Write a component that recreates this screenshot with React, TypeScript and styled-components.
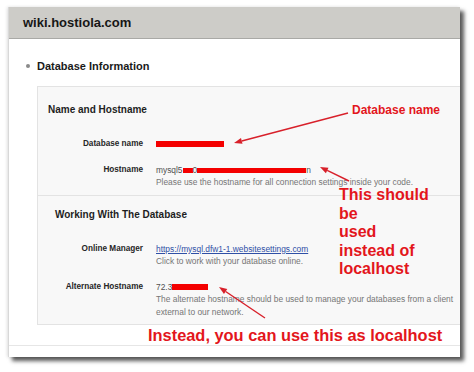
import React from "react";
import styled, { createGlobalStyle } from "styled-components";

const Global = createGlobalStyle`
  html, body { margin: 0; padding: 0; background: #ffffff; }
  body { font-family: "Liberation Sans", Arial, sans-serif; }
  * { box-sizing: border-box; }
`;

const Page = styled.div`
  position: relative;
  width: 474px;
  height: 372px;
  padding: 7px 0 0 8px;
  overflow: hidden;
`;

const Frame = styled.div`
  width: 452px;
  height: 350px;
  background: #ffffff;
  border-left: 1px solid #d8d8d8;
  box-shadow: 4px 4px 4px rgba(0, 0, 0, 0.65), -1px 0 3px rgba(0, 0, 0, 0.12);
  display: flex;
  flex-direction: column;
  overflow: hidden;
`;

const TitleBar = styled.div`
  height: 32px;
  background: #cdccc8;
  border-bottom: 1px solid #a9a9a6;
  display: flex;
  align-items: center;
  padding-left: 14px;
  font-size: 13px;
  font-weight: bold;
  color: #161616;
`;

const Content = styled.div`
  padding-top: 20px;
  display: flex;
  flex-direction: column;
`;

const SectionTitle = styled.div`
  display: flex;
  align-items: center;
  height: 14px;
  padding-left: 17px;
  gap: 7px;
  font-size: 11px;
  font-weight: bold;
  color: #1a1a1a;
`;

const Bullet = styled.span`
  width: 4px;
  height: 4px;
  border-radius: 50%;
  background: #8a8a8a;
`;

const Panel = styled.div`
  margin: 13px 0 0 28px;
  background: #f8f8f8;
  border: 1px solid #e3e3e3;
  border-right: none;
  display: flex;
  flex-direction: column;
`;

const Group = styled.div<{ $indent: number; $top: number; $bottom: number; $divider?: boolean }>`
  padding: ${(p) => p.$top}px 0 ${(p) => p.$bottom}px 0;
  border-top: ${(p) => (p.$divider ? "1px solid #e3e3e3" : "none")};
  & > h3 {
    margin: 0 0 22px ${(p) => p.$indent}px;
    font-size: 10px;
    line-height: 12px;
    font-weight: bold;
    color: #1e1e1e;
  }
`;

const Row = styled.div<{ $gap?: number }>`
  display: grid;
  grid-template-columns: 105px 1fr;
  column-gap: 13px;
  margin-top: ${(p) => p.$gap ?? 0}px;
`;

const Label = styled.div`
  text-align: right;
  font-size: 8.2px;
  line-height: 12px;
  font-weight: bold;
  color: #262626;
`;

const Value = styled.div`
  font-size: 8.4px;
  line-height: 12px;
  color: #505050;
  display: flex;
  align-items: center;
`;

const Hint = styled.div`
  font-size: 8.4px;
  line-height: 13px;
  color: #767676;
`;

const Redact = styled.span<{ $w: number; $h?: number }>`
  display: inline-block;
  width: ${(p) => p.$w}px;
  height: ${(p) => p.$h ?? 6}px;
  background: #f40000;
`;

const Link = styled.a`
  color: #2f4fa6;
  text-decoration: underline;
`;

const Footer = styled.div`
  height: 21px;
  border-bottom: 1px solid #e6e6e6;
  display: flex;
  align-items: center;
  padding-left: 139px;
  font-size: 16.4px;
  font-weight: bold;
  color: #e3161c;
`;

const Note = styled.div<{ $x: number; $y: number; $size: number; $lh: number }>`
  position: absolute;
  left: ${(p) => p.$x}px;
  top: ${(p) => p.$y}px;
  font-size: ${(p) => p.$size}px;
  line-height: ${(p) => p.$lh}px;
  font-weight: bold;
  color: #e3161c;
  white-space: nowrap;
`;

const Overlay = styled.svg`
  position: absolute;
  left: 0;
  top: 0;
  pointer-events: none;
`;

function Arrow({ x1, y1, x2, y2 }: { x1: number; y1: number; x2: number; y2: number }) {
  const dx = x2 - x1;
  const dy = y2 - y1;
  const len = Math.hypot(dx, dy);
  const ux = dx / len;
  const uy = dy / len;
  const hl = 8;
  const hw = 3;
  const bx = x2 - ux * hl;
  const by = y2 - uy * hl;
  const p1 = `${bx - uy * hw},${by + ux * hw}`;
  const p2 = `${bx + uy * hw},${by - ux * hw}`;
  return (
    <g>
      <line x1={x1} y1={y1} x2={bx} y2={by} stroke="#d8202a" strokeWidth={1.4} />
      <polygon points={`${x2},${y2} ${p1} ${p2}`} fill="#d8202a" />
    </g>
  );
}

export default function App() {
  return (
    <Page>
      <Global />
      <Frame>
        <TitleBar>wiki.hostiola.com</TitleBar>
        <Content>
          <SectionTitle>
            <Bullet />
            Database Information
          </SectionTitle>
          <Panel>
            <Group $indent={10} $top={17} $bottom={6}>
              <h3>Name and Hostname</h3>
              <Row>
                <Label>Database name</Label>
                <Value>
                  <Redact $w={68} />
                </Value>
              </Row>
              <Row $gap={14}>
                <Label>Hostname</Label>
                <div>
                  <Value>
                    mysql5
                    <Redact $w={10} $h={5} />
                    0
                    <Redact $w={109} $h={5} />
                    n
                  </Value>
                  <Hint>Please use the hostname for all connection settings inside your code.</Hint>
                </div>
              </Row>
            </Group>
            <Group $indent={17} $top={13} $bottom={5} $divider>
              <h3>Working With The Database</h3>
              <Row>
                <Label>Online Manager</Label>
                <div>
                  <Value>
                    <Link href="#">https://mysql.dfw1-1.websitesettings.com</Link>
                  </Value>
                  <Hint>Click to work with your database online.</Hint>
                </div>
              </Row>
              <Row $gap={13}>
                <Label>Alternate Hostname</Label>
                <div>
                  <Value>
                    72.3
                    <Redact $w={36} $h={6} />
                  </Value>
                  <Hint>
                    The alternate hostname should be used to manage your databases from a client
                    external to our network.
                  </Hint>
                </div>
              </Row>
            </Group>
          </Panel>
          <Footer>Instead, you can use this as localhost</Footer>
        </Content>
      </Frame>
      <Note $x={352} $y={103} $size={12} $lh={14}>
        Database name
      </Note>
      <Note $x={339} $y={186} $size={16} $lh={18.5}>
        This should
        <br />
        be
        <br />
        used
        <br />
        instead of
        <br />
        localhost
      </Note>
      <Overlay width={474} height={372} viewBox="0 0 474 372">
        <Arrow x1={348} y1={113} x2={234} y2={143} />
        <Arrow x1={349} y1={181} x2={320} y2={167} />
        <Arrow x1={265} y1={318} x2={219} y2={287} />
      </Overlay>
    </Page>
  );
}
